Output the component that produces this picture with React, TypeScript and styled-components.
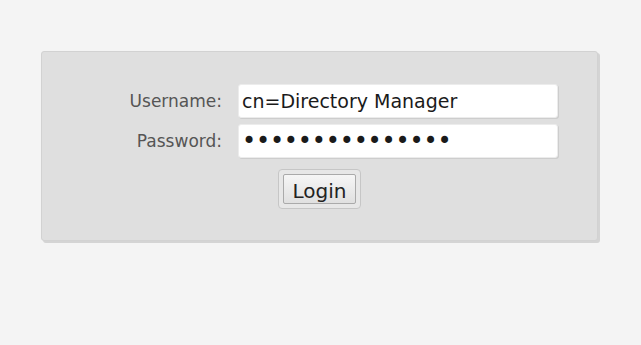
import styled, { createGlobalStyle } from "styled-components";

const GlobalStyle = createGlobalStyle`
  html, body {
    margin: 0;
    padding: 0;
    background: #f4f4f4;
    font-family: "DejaVu Sans", "Liberation Sans", sans-serif;
  }
`;

export default function App() {
  return (
    <>
      <GlobalStyle />
      <Page>
        <Panel>
          <Form onSubmit={(e) => e.preventDefault()}>
            <Label htmlFor="username">Username:</Label>
            <Field id="username" type="text" defaultValue="cn=Directory Manager" />
            <Label htmlFor="password">Password:</Label>
            <Field id="password" type="password" defaultValue="secretpassword1" $secret />
            <ButtonRow>
              <LoginButton type="submit">
                <span>Login</span>
              </LoginButton>
            </ButtonRow>
          </Form>
        </Panel>
      </Page>
    </>
  );
}

const Page = styled.div`
  padding: 51px 41px 0 41px;
  height: 345px;
  box-sizing: border-box;
`;

const Panel = styled.div`
  width: 557px;
  height: 190px;
  box-sizing: border-box;
  background: #dfdfdf;
  border: 1px solid #d2d2d2;
  border-radius: 3px;
  box-shadow: 2px 2px 0 #d4d4d4;
  padding-top: 32px;
`;

const Form = styled.form`
  display: grid;
  grid-template-columns: 180px 320px;
  column-gap: 16px;
  row-gap: 6px;
  align-items: center;
`;

const Label = styled.label`
  text-align: right;
  font-size: 17px;
  color: #555;
`;

const Field = styled.input<{ $secret?: boolean }>`
  height: 34px;
  box-sizing: border-box;
  border: 1px solid #ececec;
  border-radius: 3px;
  box-shadow: 1px 1px 0 #cdcdcd;
  background: #fff;
  padding: 0 3px;
  font-family: "DejaVu Sans", sans-serif;
  font-size: ${(p) => (p.$secret ? "24px" : "19px")};
  letter-spacing: ${(p) => (p.$secret ? "-0.2px" : "0")};
  color: #1a1a1a;
  outline: none;
`;

const ButtonRow = styled.div`
  grid-column: 1 / -1;
  display: flex;
  justify-content: center;
  margin-top: 5px;
  width: 555px;
`;

const LoginButton = styled.button`
  width: 83px;
  height: 40px;
  box-sizing: border-box;
  padding: 4px;
  border: 1px solid #c6c6c6;
  border-radius: 4px;
  background: #e7e7e7;
  cursor: pointer;

  span {
    display: flex;
    align-items: center;
    justify-content: center;
    height: 100%;
    box-sizing: border-box;
    padding-top: 3px;
    border: 1px solid #aaa;
    border-radius: 2px;
    background: linear-gradient(#f6f6f6, #e0e0e0);
    font-family: "DejaVu Sans", sans-serif;
    font-size: 20px;
    color: #222;
  }
`;
